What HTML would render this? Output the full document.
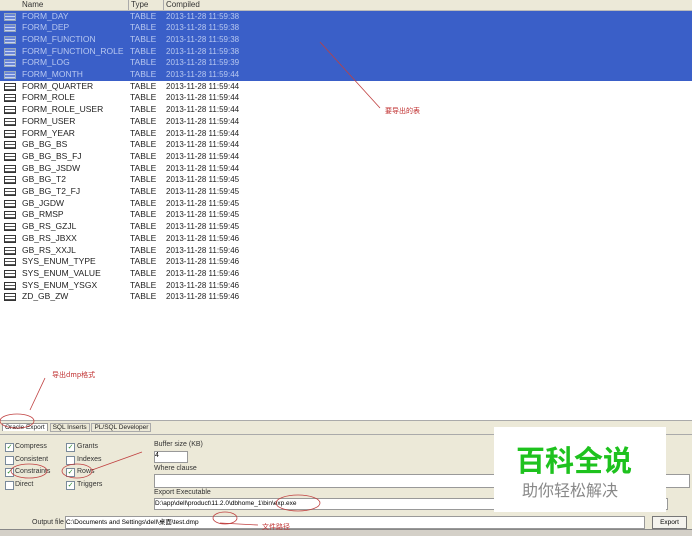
<!DOCTYPE html><html><head><style>
body{margin:0;width:692px;height:535px;overflow:hidden;background:#fff;font-family:"Liberation Sans",sans-serif;position:relative}
.a{position:absolute}
.r{position:absolute;left:0;width:692px;height:11.7px;font-size:8.5px;line-height:11.7px;color:#222}
.r span{position:absolute}
.s{background:#3a5fc8;color:#b8c8f0}
.ic{left:4px;top:2px;width:12px;height:8px;box-sizing:border-box;border:1px solid #333;background:repeating-linear-gradient(#fff 0 2px,#555 2px 3px)}
.s .ic{border-color:#9ab;background:repeating-linear-gradient(#6a86d8 0 2px,#c8d4f4 2px 3px)}
.cb{position:absolute;width:7px;height:7px;border:1px solid #7a8a9a;background:#fff;font-size:7px;line-height:7px;color:#2a8a2a;text-align:center}
.l{position:absolute;font-size:7px;color:#333}
</style></head><body>
<div class="a" style="left:0;top:0;width:692px;height:10px;background:#ece9d8;border-bottom:1px solid #bbb;font-size:8px;line-height:10px;color:#333">
<span class="a" style="left:22px">Name</span><span class="a" style="left:128px;border-left:1px solid #aaa;padding-left:2px;height:10px">Type</span><span class="a" style="left:163px;border-left:1px solid #aaa;padding-left:2px;height:10px">Compiled</span></div>
<div id="rows"></div>
<div class="a" style="left:0;top:420px;width:692px;height:115px;background:#ece9d8;border-top:1px solid #aaa"></div>
<div class="a" style="left:2px;top:423px;height:10px;font-size:6.5px;line-height:10px;color:#222">
<span style="border:1px solid #999;border-bottom:none;background:#fff;padding:0 2px">Oracle Export</span> <span style="border:1px solid #aaa;padding:0 2px">SQL Inserts</span> <span style="border:1px solid #aaa;padding:0 2px">PL/SQL Developer</span></div>
<div class="a" style="left:0;top:434px;width:692px;border-top:1px solid #aaa"></div>
<div class="cb" style="left:5px;top:443px">✓</div><div class="l" style="left:15px;top:443px">Compress</div>
<div class="cb" style="left:5px;top:456px"></div><div class="l" style="left:15px;top:456px">Consistent</div>
<div class="cb" style="left:5px;top:468px">✓</div><div class="l" style="left:15px;top:468px">Constraints</div>
<div class="cb" style="left:5px;top:481px"></div><div class="l" style="left:15px;top:481px">Direct</div>
<div class="cb" style="left:66px;top:443px">✓</div><div class="l" style="left:77px;top:443px">Grants</div>
<div class="cb" style="left:66px;top:456px"></div><div class="l" style="left:77px;top:456px">Indexes</div>
<div class="cb" style="left:66px;top:468px">✓</div><div class="l" style="left:77px;top:468px">Rows</div>
<div class="cb" style="left:66px;top:481px">✓</div><div class="l" style="left:77px;top:481px">Triggers</div>
<div class="l" style="left:154px;top:441px">Buffer size (KB)</div>
<div class="a" style="left:154px;top:451px;width:32px;height:10px;background:#fff;border:1px solid #999;font-size:7px">4</div>
<div class="l" style="left:154px;top:465px">Where clause</div>
<div class="a" style="left:154px;top:474px;width:534px;height:12px;background:#fff;border:1px solid #999"></div>
<div class="l" style="left:154px;top:489px">Export Executable</div>
<div class="a" style="left:154px;top:498px;width:512px;height:10px;background:#fff;border:1px solid #999;font-size:6.5px;line-height:10px">D:\app\dell\product\11.2.0\dbhome_1\bin\exp.exe</div>
<div class="l" style="left:32px;top:519px">Output file</div>
<div class="a" style="left:65px;top:516px;width:578px;height:11px;background:#fff;border:1px solid #999;font-size:6.5px;line-height:11px">C:\Documents and Settings\dell\桌面\test.dmp</div>
<div class="a" style="left:652px;top:516px;width:33px;height:11px;background:#f4f3ee;border:1px solid #777;font-size:6.5px;line-height:11px;text-align:center">Export</div>
<div class="a" style="left:0;top:529px;width:692px;height:6px;background:#d4d0c8;border-top:1px solid #888"></div>
<div class="a" style="left:494px;top:427px;width:172px;height:85px;background:#fff"></div>
<div class="a" style="left:516px;top:442px;font-size:29px;font-weight:bold;color:#1ec21e;font-family:'Noto Sans CJK SC',sans-serif;line-height:34px">百科全说</div>
<div class="a" style="left:522px;top:479px;font-size:16px;color:#888;font-family:'Noto Sans CJK SC',sans-serif;line-height:20px">助你轻松解决</div>
<div class="a" style="left:385px;top:106px;font-size:7px;color:#c03030;font-family:'Noto Sans CJK SC',sans-serif">要导出的表</div>
<div class="a" style="left:52px;top:370px;font-size:7px;color:#c03030;font-family:'Noto Sans CJK SC',sans-serif">导出dmp格式</div>
<div class="a" style="left:262px;top:522px;font-size:7px;color:#c03030;font-family:'Noto Sans CJK SC',sans-serif">文件路径</div>
<svg class="a" style="left:0;top:0" width="692" height="535"><g fill="none" stroke="#c04040" stroke-width="0.8">
<path d="M320 42 L380 108"/><path d="M45 378 L30 410"/><ellipse cx="17" cy="421" rx="17" ry="7"/>
<ellipse cx="29" cy="471" rx="18" ry="7"/><ellipse cx="77" cy="471" rx="15" ry="7"/><path d="M92 470 L142 452"/>
<ellipse cx="298" cy="503" rx="22" ry="8"/><ellipse cx="225" cy="518" rx="12" ry="6"/><path d="M220 523 L258 525"/></g></svg>
<script>
var d=[["FORM_DAY","38",1],["FORM_DEP","38",1],["FORM_FUNCTION","38",1],["FORM_FUNCTION_ROLE","38",1],["FORM_LOG","39",1],["FORM_MONTH","44",1],["FORM_QUARTER","44"],["FORM_ROLE","44"],["FORM_ROLE_USER","44"],["FORM_USER","44"],["FORM_YEAR","44"],["GB_BG_BS","44"],["GB_BG_BS_FJ","44"],["GB_BG_JSDW","44"],["GB_BG_T2","45"],["GB_BG_T2_FJ","45"],["GB_JGDW","45"],["GB_RMSP","45"],["GB_RS_GZJL","45"],["GB_RS_JBXX","46"],["GB_RS_XXJL","46"],["SYS_ENUM_TYPE","46"],["SYS_ENUM_VALUE","46"],["SYS_ENUM_YSGX","46"],["ZD_GB_ZW","46"]],h="";
d.forEach(function(x,i){h+='<div class="r'+(x[2]?' s':'')+'" style="top:'+(10.5+i*11.7)+'px"><span class="ic"></span><span style="left:22px">'+x[0]+'</span><span style="left:130px">TABLE</span><span style="left:166px;font-size:8px">2013-11-28 11:59:'+x[1]+'</span></div>'});
document.getElementById("rows").innerHTML=h;
</script>
</body></html>
